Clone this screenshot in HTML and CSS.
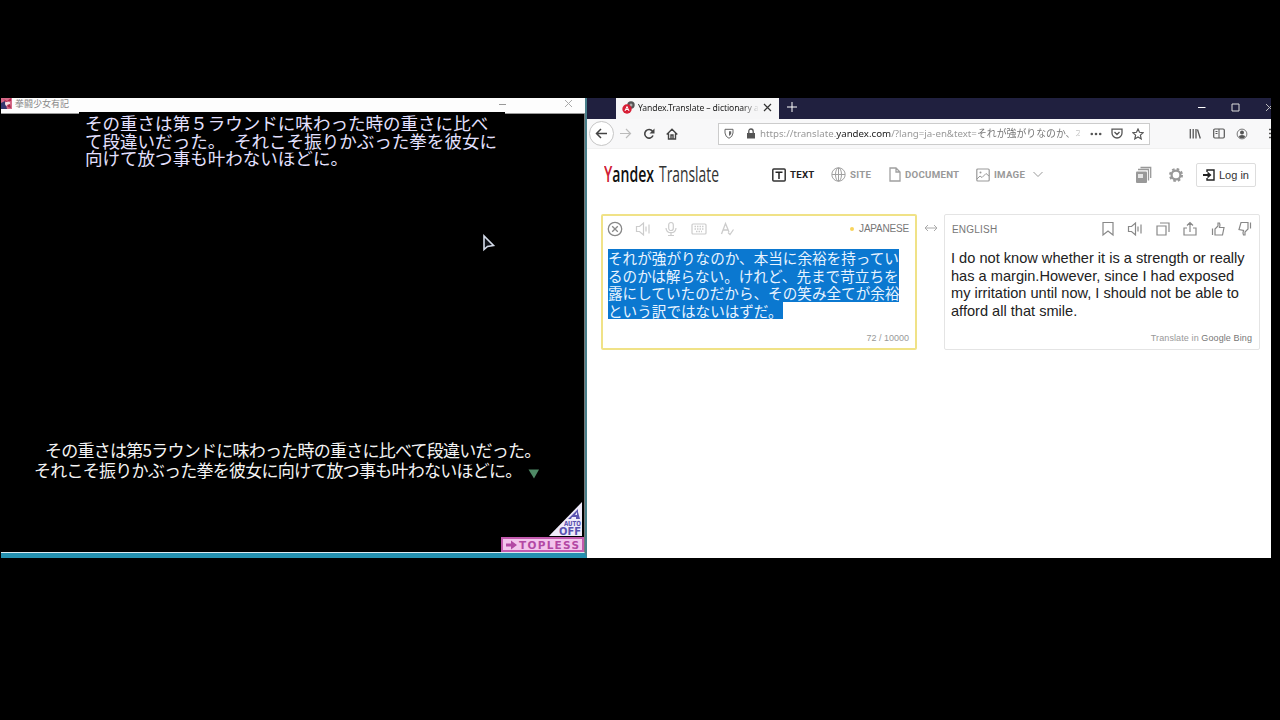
FILE: index.html
```html
<!DOCTYPE html>
<html lang="en">
<head>
    <meta charset="UTF-8">
    <title>Yandex.Translate – dictionary and online translation</title>
    <link rel="stylesheet" href="styles.css">
</head>
<body>

<div class="desktop">
    <div class="game-window">
        <div class="game-titlebar">
            <svg class="game-icon" width="11" height="11" viewBox="0 0 11 11"><rect width="11" height="11" fill="#d56a88"/><path d="M0 5L4 3L6 11H0Z" fill="#33376f"/><circle cx="6.5" cy="5.5" r="2.5" fill="#f7dfe4"/><path d="M2 1L6 3L10 0V3L5 4Z" fill="#b3264c"/><path d="M6 7L9 6L10 10L7 9Z" fill="#a62846"/></svg>
            <span class="game-title" lang="ja">拳闘少女有記</span>
            <span class="game-minimize"></span>
            <svg class="game-close" width="9" height="9" viewBox="0 0 9 9"><path d="M1 1L8 8M8 1L1 8" stroke="#aaa" fill="none"/></svg>
        </div>
        <div class="game-screen">
            <div class="hook-text" lang="ja">
                <p>その重さは第５ラウンドに味わった時の重さに比べ</p>
                <p>て段違いだった。&#12288;それこそ振りかぶった拳を彼女に</p>
                <p>向けて放つ事も叶わないほどに。</p>
            </div>
            <div class="game-text" lang="ja">
                <p class="first">その重さは第5ラウンドに味わった時の重さに比べて段違いだった。</p>
                <p>それこそ振りかぶった拳を彼女に向けて放つ事も叶わないほどに。<svg width="12" height="10" viewBox="0 0 12 10"><path d="M.5 .5H11L6 9.5Z" fill="#4f8a66"/></svg></p>
            </div>
            <svg class="auto-badge" width="34" height="34" viewBox="0 0 34 34">
                <path d="M0 34L33 0V34Z" fill="#eeeafa"/>
                <path d="M19 17L29 7V10L31 17H27V15H23L22 17Z" fill="#5a53b0"/>
                <path d="M26 13L28 10V13Z" fill="#eeeafa"/>
                <text x="15" y="24" font-size="7" textLength="17" lengthAdjust="spacingAndGlyphs">AUTO</text>
                <text x="10" y="32.500" font-size="10" textLength="22" lengthAdjust="spacingAndGlyphs">OFF</text>
            </svg>
            <div class="topless-badge">
                <svg width="80" height="12" viewBox="0 0 80 12"><path d="M3 4.500H8V1.500L14 6L8 10.500V7.500H3Z" fill="#b348a4"/><text x="16" y="9.500" font-size="10.500" textLength="60" lengthAdjust="spacing">TOPLESS</text></svg>
            </div>
            <svg class="cursor" width="14" height="18" viewBox="0 0 14 18"><path d="M2 2V15.500L5.500 12.500L11.500 11.500Z" fill="#101319" stroke="#d4dbe9" stroke-width="1.600"/></svg>
        </div>
    </div>

    <div class="browser">
        <div class="tabbar">
            <div class="tab">
                <svg width="13" height="13" viewBox="0 0 13 13"><circle cx="9" cy="4" r="3.700" fill="#555"/><circle cx="9" cy="4" r="1.500" fill="#aaa"/><circle cx="5" cy="8" r="4.700" fill="#d71e35"/><path d="M3 10L5 5.500L7 10M4 8.500H6" stroke="#fff" fill="none"/></svg>
                <span class="tab-title">Yandex.Translate – dictionary and</span>
                <svg width="9" height="9" viewBox="0 0 9 9"><path d="M1 1L8 8M8 1L1 8" stroke="#333" stroke-width="1.200"/></svg>
            </div>
            <svg class="new-tab" width="12" height="12" viewBox="0 0 12 12"><path d="M6 1V11M1 6H11" stroke="#fff"/></svg>
            <div class="window-buttons">
                <svg width="9" height="9" viewBox="0 0 9 9"><path d="M1 4.500H8.500" stroke="#fff"/></svg>
                <svg width="9" height="9" viewBox="0 0 9 9"><path d="M1 1H8V8H1Z" stroke="#ddd" fill="none"/></svg>
                <svg width="9" height="9" viewBox="0 0 9 9"><path d="M1 1L8 8M8 1L1 8" stroke="#bbb"/></svg>
            </div>
        </div>

        <div class="toolbar">
            <span class="back"><svg width="13" height="11" viewBox="0 0 13 11"><path d="M12 5.500H2M6 1L1.500 5.500L6 10" stroke="#444" stroke-width="1.500" fill="none"/></svg></span>
            <svg class="forward" width="13" height="11" viewBox="0 0 13 11"><path d="M1 5.500H11M7 1L11.500 5.500L7 10" stroke="#bbb" stroke-width="1.200" fill="none"/></svg>
            <svg class="reload" width="12" height="12" viewBox="0 0 12 12"><path d="M10 7.500A4.300 4.300 0 1 1 9.500 3.200" stroke="#444" stroke-width="1.600" fill="none"/><path d="M11.500 .5V5.500H6.500Z" fill="#444"/></svg>
            <svg class="home" width="12" height="12" viewBox="0 0 12 12"><path d="M.7 6.500L6 1.200L11.300 6.500M2.500 5.500V11H9.500V5.500M5 11V7H7V11" stroke="#444" stroke-width="1.400" fill="none"/></svg>
            <div class="urlbar">
                <svg width="10" height="11" viewBox="0 0 10 11"><path d="M1 1.300H9V5Q8.500 9 5 10.300Q1.500 9 1 5Z" stroke="#666" fill="none"/><path d="M5 3.200H7.200V5.200Q7 7 5 8Z" fill="#666"/></svg>
                <svg class="lock" width="10" height="11" viewBox="0 0 10 11"><path d="M1 5H9V10.500H1Z" fill="#555"/><path d="M2.800 5V3.500Q2.800 1 5 1T7.200 3.500V5" stroke="#555" stroke-width="1.300" fill="none"/></svg>
                <span class="url">https://translate.<b>yandex.com</b>/?lang=ja-en&amp;text=<span class="query" lang="ja">それが強がりなのか、本</span></span>
                <svg width="12" height="4" viewBox="0 0 12 4"><circle cx="1.800" cy="2" r="1.300" fill="#555"/><circle cx="6" cy="2" r="1.300" fill="#555"/><circle cx="10.200" cy="2" r="1.300" fill="#555"/></svg>
                <svg width="12" height="11" viewBox="0 0 12 11"><path d="M1 1.200H11V5A5 5 0 0 1 1 5Z M3.500 4L6 6.500L8.500 4" stroke="#555" stroke-width="1.300" fill="none"/></svg>
                <svg width="12" height="12" viewBox="0 0 12 12"><path d="M6 1L7.500 4.300L11.200 4.700L8.400 7.100L9.200 10.900L6 9L2.800 10.900L3.600 7.100L.8 4.700L4.500 4.300Z" stroke="#555" stroke-width="1.200" fill="none"/></svg>
            </div>
            <svg class="library" width="12" height="11" viewBox="0 0 12 11"><path d="M1.300 1V10.500M4.200 1V10.500M7 1V10.500M8.500 1.500L11.300 10.500" stroke="#555" stroke-width="1.300"/></svg>
            <svg class="sidebar-icon" width="12" height="11" viewBox="0 0 12 11"><rect x=".7" y="1" width="10.600" height="9" rx="1.200" stroke="#555" stroke-width="1.200" fill="none"/><path d="M6 1V10M2.500 3.500H4.500M2.500 5.500H4.500" stroke="#555"/></svg>
            <svg class="account" width="12" height="12" viewBox="0 0 12 12"><circle cx="6" cy="6" r="4.900" stroke="#777" fill="none"/><circle cx="6" cy="4.600" r="2" fill="#555"/><path d="M2.700 9Q3 7 6 7T9.300 9Q6 11.500 2.700 9Z" fill="#555"/></svg>
            <svg class="menu" width="12" height="11" viewBox="0 0 12 11"><path d="M1 1.500H12M1 5.500H12M1 9.500H12" stroke="#555" stroke-width="1.300"/></svg>
        </div>

        <div class="page">
            <div class="header">
                <svg class="logo" width="117" height="26" viewBox="0 0 117 26"><text x="0" y="19.500" font-size="22" textLength="50" lengthAdjust="spacingAndGlyphs" class="logo-name"><tspan class="logo-y">Y</tspan>andex</text><text x="55" y="19.500" font-size="22" textLength="60" lengthAdjust="spacingAndGlyphs" class="logo-product">Translate</text></svg>
                <div class="nav">
                    <span class="nav-item nav-text active"><svg width="14" height="14" viewBox="0 0 14 14"><rect x=".8" y="1" width="12.400" height="12" rx="1" stroke="#333" stroke-width="1.500" fill="none"/><path d="M3.500 4.200H10.500M7 4V11" stroke="#222" stroke-width="1.500"/></svg><span>TEXT</span></span>
                    <span class="nav-item nav-site"><svg width="15" height="15" viewBox="0 0 15 15"><g stroke="#a0a0a0" fill="none"><circle cx="7.500" cy="7.500" r="6.700"/><ellipse cx="7.500" cy="7.500" rx="3" ry="6.700"/><path d="M7.500 1V14M1 7.500H14"/></g></svg><span>SITE</span></span>
                    <span class="nav-item nav-document"><svg width="12" height="15" viewBox="0 0 12 15"><path d="M1 1H7L11 5V14H1ZM7 1V5H11" stroke="#a0a0a0" stroke-width="1.300" fill="none"/></svg><span>DOCUMENT</span></span>
                    <span class="nav-item nav-image"><svg width="14" height="14" viewBox="0 0 14 14"><rect x=".8" y="1" width="12.400" height="12" rx="1" stroke="#999" stroke-width="1.200" fill="none"/><circle cx="4.500" cy="4.500" r="1" fill="#999"/><path d="M1 11L4 8L6 9.500L10 5.500L13 8" stroke="#999" fill="none"/></svg><span>IMAGE</span></span>
                    <svg class="chevron" width="10" height="7" viewBox="0 0 10 7"><path d="M.5 1L5 5.500L9.500 1" stroke="#999" fill="none"/></svg>
                </div>
                <svg class="collections" width="17" height="18" viewBox="0 0 17 18"><path d="M3 3.500H13.500V14.500M5.500 1.500H15.700V12" stroke="#999" stroke-width="1.300" fill="none"/><rect x="1" y="5.500" width="11" height="11.500" rx="1" fill="#999"/><rect x="3" y="8" width="5" height="4" fill="#e5e5e5"/></svg>
                <svg class="settings" width="16" height="16" viewBox="0 0 16 16"><circle cx="8" cy="8" r="5.900" stroke="#999" stroke-width="2.200" stroke-dasharray="2.500 2.130" fill="none"/><circle cx="8" cy="8" r="4.400" stroke="#999" stroke-width="2.200" fill="none"/></svg>
                <div class="login"><svg width="14" height="12" viewBox="0 0 14 12"><path d="M5 3V1H12V11H5V9" stroke="#222" stroke-width="1.400" fill="none"/><path d="M1 5H5.500V2.500L9.500 6L5.500 9.500V7H1Z" fill="#222"/></svg><span>Log in</span></div>
            </div>

            <div class="panels">
                <div class="panel source">
                    <div class="panel-head">
                        <svg width="16" height="16" viewBox="0 0 16 16"><circle cx="8" cy="8" r="6.700" stroke="#888" stroke-width="1.300" fill="none"/><path d="M5.200 5.200L10.800 10.800M10.800 5.200L5.200 10.800" stroke="#888" stroke-width="1.300"/></svg>
                        <svg width="16" height="16" viewBox="0 0 16 16"><path d="M1.500 5.500H4.500L8.500 2V14L4.500 10.500H1.500ZM11 5.500V10.500M14 3.500V12.500" stroke="#ccc" stroke-width="1.200" fill="none"/></svg>
                        <svg width="16" height="16" viewBox="0 0 16 16"><rect x="5.700" y="1.500" width="4.600" height="8" rx="2.300" stroke="#ccc" stroke-width="1.200" fill="none"/><path d="M3 7Q3.300 11.700 8 11.700T13 7M8 12V14.500M5 14.500H11" stroke="#ccc" stroke-width="1.200" fill="none"/></svg>
                        <svg width="16" height="16" viewBox="0 0 16 16"><rect x="1" y="3" width="14" height="10" rx="1" stroke="#ccc" stroke-width="1.200" fill="none"/><path d="M3.500 5.500H12.500M3.500 8H12.500M5 10.500H11" stroke="#ccc" stroke-width="1.500" stroke-dasharray="1.500 1"/></svg>
                        <svg width="16" height="16" viewBox="0 0 16 16"><path d="M2.500 13L6.500 2.500L10 11M4 9H9M9 11.500L11 13.500L14.500 8.500" stroke="#ccc" stroke-width="1.300" fill="none"/></svg>
                        <span class="lang"><i class="dot"></i>JAPANESE</span>
                    </div>
                    <div class="source-text" lang="ja">
                        <p>それが強がりなのか、本当に余裕を持ってい</p>
                        <p>るのかは解らない。けれど、先まで苛立ちを</p>
                        <p>露にしていたのだから、その笑み全てが余裕</p>
                        <p>という訳ではないはずだ。</p>
                    </div>
                    <div class="panel-foot counter">72 / 10000</div>
                </div>
                <svg class="swap" width="14" height="8" viewBox="0 0 14 8"><path d="M1 4H13M4 1L1 4L4 7M10 1L13 4L10 7" stroke="#aaa" fill="none"/></svg>
                <div class="panel result">
                    <div class="panel-head">
                        <span class="lang">ENGLISH</span>
                        <svg width="16" height="16" viewBox="0 0 16 16"><path d="M3 1.500H13V14L8 10L3 14Z" stroke="#888" stroke-width="1.200" fill="none"/></svg>
                        <svg width="16" height="16" viewBox="0 0 16 16"><path d="M1.500 5.500H4.500L8.500 2V14L4.500 10.500H1.500ZM11 5.500V10.500M14 3.500V12.500" stroke="#888" stroke-width="1.200" fill="none"/></svg>
                        <svg width="16" height="16" viewBox="0 0 16 16"><path d="M2 5H11V14H2ZM5 2H14V11" stroke="#888" stroke-width="1.200" fill="none"/></svg>
                        <svg width="16" height="16" viewBox="0 0 16 16"><path d="M5 7H2V14H14V7H11M8 11V2M5 4.500L8 1.500L11 4.500" stroke="#888" stroke-width="1.200" fill="none"/></svg>
                        <svg width="16" height="16" viewBox="0 0 16 16"><path d="M2.500 7.500V14M5 14V8L8 5V2H9.500Q10.500 4 9.500 6.500H14L12.500 14Z" stroke="#888" stroke-width="1.200" fill="none"/></svg>
                        <svg width="16" height="16" viewBox="0 0 16 16"><path d="M13.500 1.500V7.500M11 1.500V8L8 11V14H6.500Q5.500 12 6.500 9.500L2 8.500L4 1.500Z" stroke="#888" stroke-width="1.200" fill="none"/></svg>
                    </div>
                    <div class="result-text">I do not know whether it is a strength or really<br>has a margin.However, since I had exposed<br>my irritation until now, I should not be able to<br>afford all that smile.</div>
                    <div class="panel-foot">Translate in <b>Google</b> <b>Bing</b></div>
                </div>
            </div>
        </div>
    </div>
</div>

</body>
</html>
```
FILE: styles.css
```css
* {
    box-sizing: border-box;
}

body {
    margin: 0;
    width: 1280px;
    height: 720px;
    overflow: hidden;
    background: #000;
    font-family: "Liberation Sans", "Noto Sans CJK JP", sans-serif;
}

p {
    margin: 0;
}

svg {
    display: block;
    flex: none;
}

[lang="ja"] {
    font-family: "Noto Sans CJK JP", sans-serif;
    white-space: nowrap;
}

.desktop {
    display: flex;
    padding: 98px 9px 0 1px;
}

/* game window */
.game-window {
    width: 586px;
    height: 460px;
    display: flex;
    flex-direction: column;
    border-right: 2px solid #487f8a;
    border-bottom: 5px solid #2591b0;
}

.game-titlebar {
    display: flex;
    align-items: center;
    height: 16px;
    padding: 0 12px 4px 0;
    background: #fdfdfd;
    border-bottom: 1px solid #999;
}

.game-title {
    margin-left: 3px;
    font-size: 9px;
    line-height: 11px;
    color: #888;
}

.game-minimize {
    width: 7px;
    height: 1px;
    margin: 2px 58px 0 auto;
    background: #999;
}

.game-screen {
    position: relative;
    flex: 1;
    background: #000;
    border-right: 1px solid #777;
    border-bottom: 1px solid #dceaf0;
}

.hook-text {
    width: 426px;
    margin: -2px 0 0 78px;
    padding: 2px 0 0 6px;
    background: #000;
    color: #e4e0ff;
    font-size: 17.55px;
    line-height: 17.6px;
}

.game-text {
    margin: 273px 0 0 33px;
    color: #f4f4f4;
    font-size: 17px;
    line-height: 20.5px;
    letter-spacing: -0.75px;
}

.game-text .first {
    padding-left: 11px;
}

.game-text svg {
    display: inline-block;
    margin-left: 6px;
    vertical-align: -2px;
}

.auto-badge {
    position: absolute;
    right: 1px;
    bottom: 16px;
}

.auto-badge text {
    font-family: "DejaVu Sans", sans-serif;
    font-weight: bold;
    fill: #5a53b0;
}

.topless-badge {
    position: absolute;
    right: 0;
    bottom: 0;
    width: 83px;
    height: 15px;
    border: 2px solid #c35aae;
    background: #f3c4ec;
}

.topless-badge text {
    font-family: "DejaVu Sans", sans-serif;
    font-weight: bold;
    fill: #b348a4;
}

.cursor {
    position: absolute;
    left: 481px;
    top: 120px;
}

/* browser window */
.browser {
    width: 684px;
    height: 460px;
    background: #fff;
    overflow: hidden;
}

.tabbar {
    display: flex;
    align-items: center;
    height: 21px;
    padding-left: 29px;
    background: #20203f;
}

.tab {
    display: flex;
    align-items: center;
    width: 163px;
    height: 21px;
    padding: 0 7px 2px 6px;
    background: #f6f6f7;
}

.tab-title {
    width: 121px;
    margin: 1px 5px 0 3px;
    overflow: hidden;
    white-space: nowrap;
    font-family: "Noto Sans", sans-serif;
    font-size: 8.6px;
    line-height: 14px;
    letter-spacing: -0.1px;
    color: #222;
    mask-image: linear-gradient(to right, #000 105px, transparent 121px);
}

.new-tab {
    margin: 0 0 3px 7px;
}

.window-buttons {
    display: flex;
    gap: 25px;
    margin: 0 -3px 3px auto;
}

.toolbar {
    display: flex;
    align-items: center;
    height: 30px;
    padding-left: 2px;
    background: #f8f8f9;
    border-bottom: 1px solid #f1f1f1;
}

.back {
    display: flex;
    flex: none;
    align-items: center;
    justify-content: center;
    width: 25px;
    height: 25px;
    border: 1px solid #c6c6c6;
    border-radius: 50%;
    background: #fff;
}

.forward {
    margin-left: 5px;
}

.reload {
    margin-left: 11px;
}

.home {
    margin-left: 11px;
}

.urlbar {
    display: flex;
    flex: none;
    align-items: center;
    gap: 9px;
    width: 432px;
    height: 22px;
    margin-left: 40px;
    padding: 0 5px;
    border: 1px solid #ccc;
    background: #fff;
}

.urlbar .lock {
    margin-left: 3px;
}

.url {
    width: 327px;
    margin: 0 1px 0 -5px;
    overflow: hidden;
    white-space: nowrap;
    font-family: "Noto Sans", "Noto Sans CJK JP", sans-serif;
    font-size: 9.7px;
    line-height: 18px;
    color: #999;
    mask-image: linear-gradient(to right, #000 305px, transparent 327px);
}

.url b {
    font-weight: normal;
    color: #222;
}

.query {
    font-size: 9.9px;
    color: #777;
}

.library {
    margin-left: 39px;
}

.sidebar-icon {
    margin-left: 12px;
}

.account {
    margin-left: 11px;
}

.menu {
    margin-left: 20px;
}

/* translate page */
.header {
    display: flex;
    align-items: center;
    height: 51px;
    padding-left: 17px;
}

.logo text {
    font-family: "Open Sans", sans-serif;
    fill: #333;
}

.logo .logo-name {
    font-weight: 600;
    fill: #111;
}

.logo .logo-product {
    font-weight: 400;
}

.logo .logo-y {
    fill: #d02034;
}

.nav {
    display: flex;
    align-items: center;
    width: 321px;
    margin-left: 51px;
}

.nav-item {
    display: flex;
    align-items: center;
    gap: 4px;
    font-family: Roboto, sans-serif;
    font-size: 9.7px;
    font-weight: bold;
    letter-spacing: 0.25px;
    color: #999;
}

.nav-item.active {
    color: #222;
}

.nav-text {
    width: 59px;
}

.nav-site {
    width: 58px;
}

.nav-document {
    width: 87px;
}

.nav-image {
    width: 57px;
}

.collections {
    margin-left: 42px;
}

.settings {
    margin-left: 16px;
}

.login {
    display: flex;
    align-items: center;
    gap: 3px;
    width: 60px;
    height: 24px;
    margin-left: 12px;
    padding-left: 5px;
    border: 1px solid #ddd;
    border-radius: 2px;
    font-size: 11px;
    white-space: nowrap;
    color: #333;
}

.panels {
    display: flex;
    margin: 14px 0 0 14px;
}

.panel {
    display: flex;
    flex-direction: column;
    width: 316px;
    height: 136px;
    border: 1px solid #e4e4e4;
    border-radius: 2px;
}

.panel.source {
    border: 2px solid #f0e287;
}

.swap {
    margin: 10px 6px 0 7px;
}

.panel-head {
    display: flex;
    align-items: center;
    gap: 12px;
    height: 28px;
    padding: 0 7px;
}

.result .panel-head {
    padding-right: 6px;
    gap: 11.5px;
}

.source .panel-head {
    height: 25px;
    padding: 0 6px 0 4px;
}

.lang {
    font-size: 10px;
    letter-spacing: 0.2px;
    color: #777;
}

.source .lang {
    display: flex;
    align-items: center;
    margin-left: auto;
    letter-spacing: -0.2px;
}

.result .lang {
    margin-right: auto;
}

.dot {
    width: 4px;
    height: 4px;
    margin-right: 5px;
    border-radius: 50%;
    background: #f8d45c;
}

.source-text {
    padding: 8px 0 0 5px;
    font-size: 14.6px;
    line-height: 17.5px;
    color: #e9f4ff;
}

.source-text p {
    width: fit-content;
    background: #0b78d0;
}

.result-text {
    padding: 7px 0 0 6px;
    font-size: 14.6px;
    line-height: 17.5px;
    white-space: nowrap;
    color: #222;
}

.panel-foot {
    margin-top: auto;
    padding: 0 7px 6px;
    text-align: right;
    font-size: 9px;
    letter-spacing: 0.1px;
    color: #999;
}

.panel-foot b {
    font-weight: normal;
    color: #777;
}

.source .panel-foot {
    padding: 0 6px 5px;
    letter-spacing: 0;
}
```
